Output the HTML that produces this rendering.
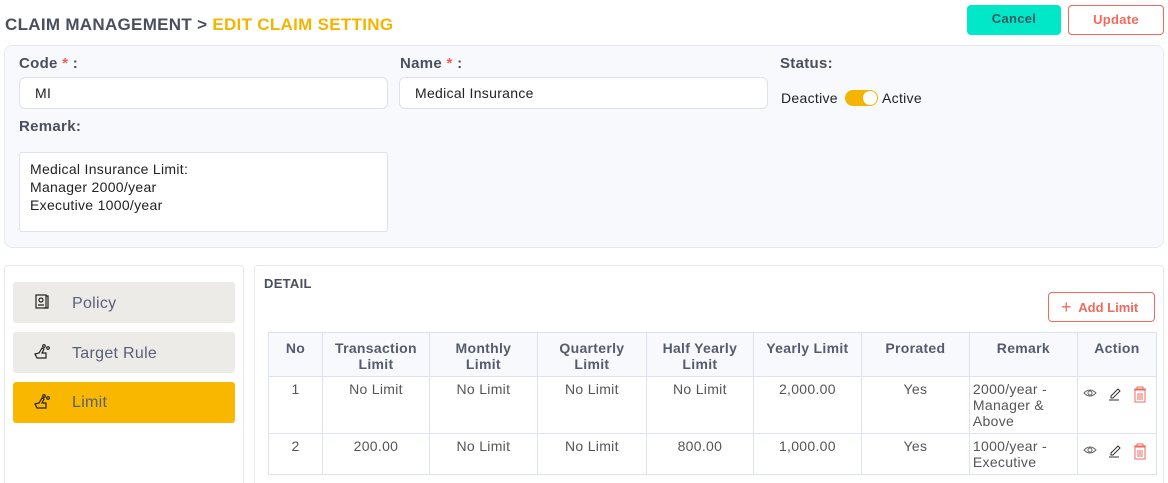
<!DOCTYPE html>
<html><head><meta charset="utf-8"><style>
*{box-sizing:border-box;margin:0;padding:0}
html,body{width:1168px;height:483px;overflow:hidden}
body{background:#fff;font-family:"Liberation Sans",sans-serif;color:#333;position:relative;letter-spacing:0.3px}
.abs{position:absolute}
.title{left:5px;top:15px;font-size:17px;font-weight:bold;color:#4a4e5e}
.title span{color:#f5b400}
.btn{top:5px;height:30px;border-radius:4px;font-size:13px;font-weight:bold;text-align:center;line-height:28px}
.panel{background:#f8f9fd;border:1px solid #e6e9f0;border-radius:8px}
.lbl{font-size:15px;font-weight:bold;color:#4a4e5e}
.lbl i{color:#f0604d;font-style:normal}
.inp{background:#fff;border:1px solid #dfe2ea;border-radius:6px;font-size:14px;padding-left:15px;line-height:30px;height:32px;color:#222}
.menu{left:13px;width:222px;height:41px;border-radius:3px;background:#ecebe7;font-size:16px;color:#59607a;line-height:41px;padding-left:59px}
.menu svg{position:absolute;left:20px;top:11px}
table{border-collapse:collapse;font-size:14px;color:#555}
td,th{border:1px solid #dde2ee;text-align:center;vertical-align:top}
th{background:#f8f9fd;font-weight:bold;color:#555b6e;padding:7px 12px 0;line-height:16px}
td{padding-top:4px;line-height:16px}
</style></head><body>
<div class="abs title">CLAIM MANAGEMENT &gt; <span>EDIT CLAIM SETTING</span></div>
<div class="abs btn" style="left:967px;width:94px;background:#00e8c8;color:#3b5a60;">Cancel</div>
<div class="abs btn" style="left:1068px;width:96px;border:1px solid #f26a5c;color:#f26a5c;">Update</div>

<div class="abs panel" style="left:4px;top:45px;width:1160px;height:203px"></div>
<div class="abs lbl" style="left:19px;top:55px">Code <i>*</i> :</div>
<div class="abs inp" style="left:19px;top:77px;width:369px">MI</div>
<div class="abs lbl" style="left:400px;top:55px">Name <i>*</i> :</div>
<div class="abs inp" style="left:399px;top:77px;width:369px">Medical Insurance</div>
<div class="abs lbl" style="left:780px;top:55px">Status:</div>
<div class="abs" style="left:781px;top:90px;font-size:14px;color:#222">Deactive</div>
<div class="abs" style="left:845px;top:90px;width:33px;height:16px;border-radius:8px;background:#f5b400"><div style="position:absolute;right:1px;top:1px;width:14px;height:14px;border-radius:50%;background:#fff"></div></div>
<div class="abs" style="left:882px;top:90px;font-size:14px;color:#222">Active</div>
<div class="abs lbl" style="left:19px;top:118px">Remark:</div>
<div class="abs" style="left:19px;top:152px;width:369px;height:80px;background:#fff;border:1px solid #dfe2ea;border-radius:3px;font-size:14px;line-height:18px;padding:7px 10px;color:#222">Medical Insurance Limit:<br>Manager 2000/year<br>Executive 1000/year</div>

<div class="abs" style="left:4px;top:265px;width:240px;height:218px;border:1px solid #e6e9f0;border-bottom:none;border-radius:4px 4px 0 0"></div>
<div class="abs menu" style="top:282px;line-height:43px"><svg width="18" height="18" viewBox="0 0 18 18" fill="none" stroke="#222" stroke-width="1.2"><rect x="3" y="2" width="10" height="13"/><circle cx="8" cy="7" r="2"/><path d="M5 12h6M13 3h2v12h-4"/></svg>Policy</div>
<div class="abs menu" style="top:332px;line-height:43px"><svg width="18" height="18" viewBox="0 0 18 18" fill="none" stroke="#222" stroke-width="1.2"><path d="M2 11l4-1 3-5 2 1-2 4h4v5H4z"/><circle cx="11" cy="3" r="1.3"/><circle cx="15" cy="5" r="1.3"/></svg>Target Rule</div>
<div class="abs menu" style="top:382px;background:#f9b700;line-height:41px"><svg width="18" height="18" viewBox="0 0 18 18" fill="none" stroke="#222" stroke-width="1.2"><path d="M2 11l4-1 3-5 2 1-2 4h4v5H4z"/><circle cx="11" cy="3" r="1.3"/><circle cx="15" cy="5" r="1.3"/></svg>Limit</div>

<div class="abs" style="left:254px;top:265px;width:910px;height:218px;border:1px solid #e6e9f0;border-bottom:none;border-radius:4px 4px 0 0"></div>
<div class="abs" style="left:264px;top:276px;font-size:13px;font-weight:bold;color:#4a4e5e">DETAIL</div>
<div class="abs" style="left:1048px;top:292px;width:107px;height:30px;border:1px solid #f26a5c;border-radius:4px;color:#f26a5c;font-size:13px;font-weight:bold;line-height:28px;padding-left:12px;letter-spacing:0"><span style="font-size:18px;font-weight:normal;vertical-align:-1px">+</span>&nbsp; Add Limit</div>

<table class="abs" style="left:268px;top:332px;width:889px">
<tr style="height:44px"><th style="width:54px">No</th><th style="width:106px">Transaction Limit</th><th style="width:108px">Monthly Limit</th><th style="width:109px">Quarterly Limit</th><th style="width:107px">Half Yearly Limit</th><th style="width:108px;padding:7px 0 0">Yearly Limit</th><th style="width:108px">Prorated</th><th style="width:108px">Remark</th><th>Action</th></tr>
<tr style="height:57px"><td>1</td><td>No Limit</td><td>No Limit</td><td>No Limit</td><td>No Limit</td><td>2,000.00</td><td>Yes</td><td style="text-align:left;padding-left:3px">2000/year - Manager &amp; Above</td><td></td></tr>
<tr style="height:41px"><td>2</td><td>200.00</td><td>No Limit</td><td>No Limit</td><td>800.00</td><td>1,000.00</td><td>Yes</td><td style="text-align:left;padding-left:3px">1000/year - Executive</td><td></td></tr>
</table>
<svg class="abs" style="left:1082px;top:384px" width="70" height="20"><g id="ic"><path d="M2 9q6-6 12 0q-6 6-12 0z" fill="none" stroke="#666"/><circle cx="8" cy="9" r="2" fill="none" stroke="#666"/><path d="M29 12l7-7 2 2-7 7h-2z M27 16h10" fill="none" stroke="#333"/><path d="M52 5h12M55 5v-2h6v2M53 6h10v12h-10z M56 9v7M58 9v7M60 9v7" fill="none" stroke="#f26a5c"/></g></svg>
<svg class="abs" style="left:1082px;top:441px" width="70" height="20"><use href="#ic"/></svg>
</body></html>
